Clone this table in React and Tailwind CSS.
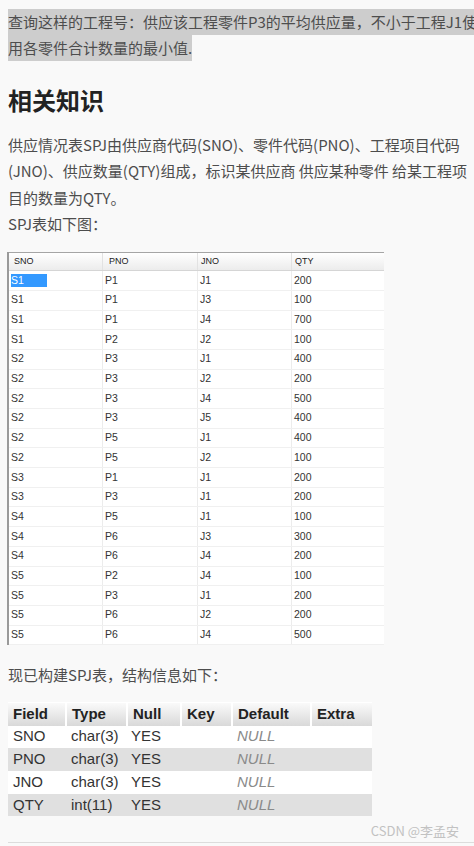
import React from "react";

const spj = [
  ["S1", "P1", "J1", "200"],
  ["S1", "P1", "J3", "100"],
  ["S1", "P1", "J4", "700"],
  ["S1", "P2", "J2", "100"],
  ["S2", "P3", "J1", "400"],
  ["S2", "P3", "J2", "200"],
  ["S2", "P3", "J4", "500"],
  ["S2", "P3", "J5", "400"],
  ["S2", "P5", "J1", "400"],
  ["S2", "P5", "J2", "100"],
  ["S3", "P1", "J1", "200"],
  ["S3", "P3", "J1", "200"],
  ["S4", "P5", "J1", "100"],
  ["S4", "P6", "J3", "300"],
  ["S4", "P6", "J4", "200"],
  ["S5", "P2", "J4", "100"],
  ["S5", "P3", "J1", "200"],
  ["S5", "P6", "J2", "200"],
  ["S5", "P6", "J4", "500"],
];

const fields = [
  ["SNO", "char(3)"],
  ["PNO", "char(3)"],
  ["JNO", "char(3)"],
  ["QTY", "int(11)"],
];

const cjk = { fontFamily: '"Noto Sans CJK SC", "Noto Sans", sans-serif' };
const grid = "grid grid-cols-[94px_95px_94px_1fr]";

// screenshot of the SPJ table from a desktop db tool
const SpjShot = () => (
  <div
    className="w-[377px] bg-white border-l-2 border-l-[#9a9a9a] text-[#333] text-[10.5px]"
    style={{ fontFamily: '"Liberation Sans", Arial, sans-serif' }}
  >
    <div className={`${grid} h-[19px] border-t border-t-[#a5a5a5] border-b border-b-[#d5d5d5] bg-gradient-to-b from-white to-[#ececec] text-[9px] text-[#222]`}>
      <div className="pl-[5px] flex items-center border-r border-r-[#e2e2e2]">SNO</div>
      <div className="pl-[6px] flex items-center border-r border-r-[#e2e2e2]">PNO</div>
      <div className="pl-[3px] flex items-center border-r border-r-[#e2e2e2]">JNO</div>
      <div className="pl-[3px] flex items-center">QTY</div>
    </div>
    {spj.map((r, i) => (
      <div key={i} className={`${grid} h-[19.7px] border-b border-b-[#f0f0f0]`}>
        {r.map((c, j) => (
          <div key={j} className={`flex items-center pl-[2px] ${j < 3 ? "border-r border-r-[#ececec]" : ""}`}>
            {i === 0 && j === 0 ? (
              <span className="bg-[#3399ff] text-white w-[36px] h-[13px] flex items-center">{c}</span>
            ) : (
              c
            )}
          </div>
        ))}
      </div>
    ))}
  </div>
);

const cols = "grid grid-cols-[57px_59px_52px_49px_77px_60px] gap-x-[2px]";

const FieldTable = () => (
  <div
    className="w-[364px] bg-white text-[15px] text-[#333]"
    style={{ fontFamily: '"Liberation Sans", Arial, sans-serif' }}
  >
    <div className={`${cols} h-[23px] pt-[1px] font-bold text-[#222]`}>
      {["Field", "Type", "Null", "Key", "Default", "Extra"].map((h) => (
        <div key={h} className="pl-[5px] flex items-center bg-gradient-to-b from-[#fafafa] to-[#d9d9d9]">
          {h}
        </div>
      ))}
    </div>
    {fields.map(([f, t], i) => (
      <div key={f} className={`${cols} h-[22.8px] items-center ${i % 2 ? "bg-[#e0e0e0]" : ""}`}>
        <div className="pl-[5px]">{f}</div>
        <div className="pl-[4px]">{t}</div>
        <div className="pl-[3px]">YES</div>
        <div />
        <div className="pl-[4px] italic text-[#8a8a8a]">NULL</div>
        <div />
      </div>
    ))}
  </div>
);

export default function App() {
  return (
    <div className="w-[474px] h-[846px] overflow-hidden bg-[#f9f9f9]" style={cjk}>
      <div className="pl-[8px] pt-[9px] text-[15px] text-[#4d4d4d]">
        <div className="whitespace-nowrap h-[26px] leading-[26px] bg-[#cdcdcd] w-[480px]">
          查询这样的工程号：供应该工程零件P3的平均供应量，不小于工程J1使
        </div>
        <div className="h-[26px] leading-[26px] bg-[#cdcdcd] w-fit">用各零件合计数量的最小值.</div>

        <h2 className="mt-[23px] h-[32px] leading-[32px] text-[24px] font-bold text-[#222]">相关知识</h2>

        <div className="mt-[16px] leading-[26.3px] whitespace-nowrap">
          <div>供应情况表SPJ由供应商代码(SNO)、零件代码(PNO)、工程项目代码</div>
          <div>(JNO)、供应数量(QTY)组成，标识某供应商 供应某种零件 给某工程项</div>
          <div>目的数量为QTY。</div>
          <div>SPJ表如下图：</div>
        </div>

        <div className="mt-[15px] -ml-[1px]">
          <SpjShot />
        </div>

        <div className="mt-[17px] h-[26px] leading-[26px]">现已构建SPJ表，结构信息如下：</div>

        <div className="mt-[14px]">
          <FieldTable />
        </div>

        <div className="mt-[6px] flex justify-end pr-[15px] text-[13px] text-[#c2c2c2] h-[18px] leading-[18px]">
          CSDN @李孟安
        </div>
        <div className="mt-[2px] border-t border-t-[#dcdcdc]" />
      </div>
    </div>
  );
}
